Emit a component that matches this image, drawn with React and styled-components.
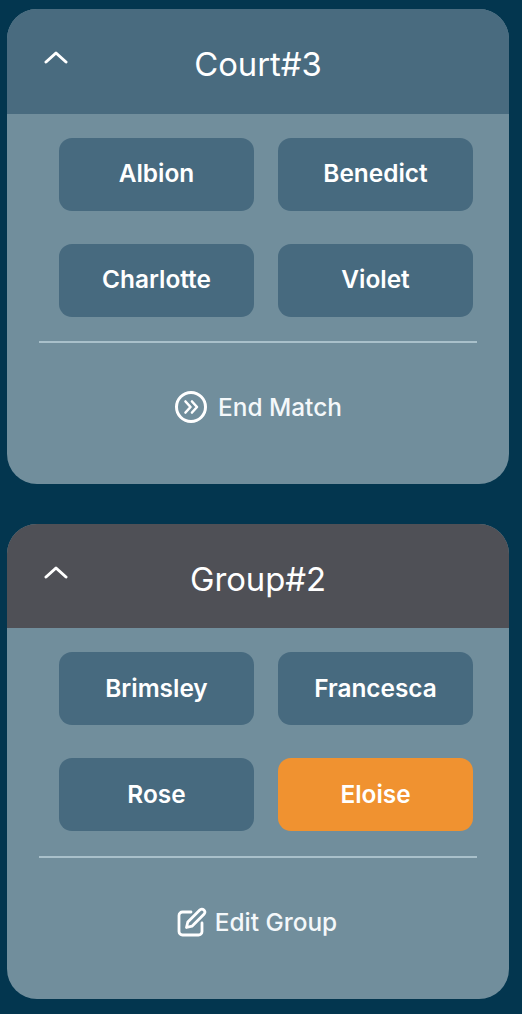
import React from 'react';
import styled, { createGlobalStyle } from 'styled-components';

const GlobalStyle = createGlobalStyle`
  html, body {
    margin: 0;
    padding: 0;
    background-color: #03364f;
    font-family: Inter, "Liberation Sans", sans-serif;
  }
`

const Page = styled.div`
  display: flex;
  flex-direction: column;
  gap: 40px;
  width: 522px;
  height: 1014px;
  box-sizing: border-box;
  padding: 9.2px 13px 0 7px;
  overflow: hidden;
`
const Card = styled.section`
  display: flex;
  flex-direction: column;
  height: 474.8px;
  border-radius: 30px;
  overflow: hidden;
  background-color: #718e9c;
`
const Header = styled.header`
  position: relative;
  display: flex;
  align-items: center;
  justify-content: center;
  flex: 0 0 104.4px;
  box-sizing: border-box;
  padding-top: 6px;
  background-color: ${props => props.$color};
`
const Title = styled.h2`
  margin: 0;
  color: #fff;
  font-size: 32.8px;
  font-weight: 400;
`
const Toggle = styled.svg`
  position: absolute;
  left: 37px;
  top: 41px;
  width: 24px;
  height: 16px;
`
const Players = styled.div`
  display: grid;
  grid-template-columns: 195px 195px;
  grid-auto-rows: 73px;
  gap: 33px 24px;
  padding: 24px 36px 24.4px 52px;
`
const Player = styled.button`
  border: 0;
  border-radius: 13px;
  padding: 0 0 2px;
  color: #fff;
  font-family: inherit;
  font-size: 24.4px;
  font-weight: 575;
  background-color: ${props => (props.$active ? '#f09230' : '#476a7f')};
`
const Divider = styled.hr`
  width: 438px;
  height: 2px;
  margin: 0 0 0 32px;
  border: 0;
  background-color: #a9c0ca;
`
const Action = styled.button`
  display: flex;
  align-items: center;
  justify-content: center;
  gap: ${props => props.$gap}px;
  height: 129px;
  border: 0;
  padding: 0 ${props => props.$shift}px 1px 0;
  color: #f4f8fa;
  background: none;
  font-family: inherit;
  font-size: 24.4px;
  font-weight: 500;
`

const Chevron = () => (
  <Toggle viewBox="0 0 24 16" fill="none" stroke="#fff" strokeWidth="3" strokeLinecap="round" strokeLinejoin="round">
    <path d="M2 12 L12 3 L22 12" />
  </Toggle>
)

const EndIcon = () => (
  <svg width="34" height="34" viewBox="0 0 34 34" fill="none" stroke="#fff" strokeLinecap="round" strokeLinejoin="round">
    <circle cx="17" cy="17" r="14.5" strokeWidth="3" />
    <path d="M11.5 11.5 L16.5 17 L11.5 22.5 M18 11.5 L23 17 L18 22.5" strokeWidth="2.6" />
  </svg>
)

const EditIcon = () => (
  <svg width="30" height="30" viewBox="0 0 30 30" fill="none" stroke="#fff" strokeWidth="2.8" strokeLinecap="round" strokeLinejoin="round">
    <path d="M14 5 H5.5 A3.5 3.5 0 0 0 2 8.5 V24.5 A3.5 3.5 0 0 0 5.5 28 H21.5 A3.5 3.5 0 0 0 25 24.5 V16" />
    <path d="M23 2.8 A3 3 0 0 1 27.2 7 L15 19.2 L9.5 20.5 L10.8 15 Z" />
  </svg>
)

const groups = [
  { title: 'Court#3', color: '#496b7f', players: ['Albion', 'Benedict', 'Charlotte', 'Violet'], action: 'End Match', icon: <EndIcon />, gap: 10, shift: 0 },
  { title: 'Group#2', color: '#4f5056', players: ['Brimsley', 'Francesca', 'Rose', 'Eloise'], active: 'Eloise', action: 'Edit Group', icon: <EditIcon />, gap: 8, shift: 2 },
]

const App = () => (
  <>
    <GlobalStyle />
    <Page>
      {groups.map(group => (
        <Card key={group.title}>
          <Header $color={group.color}>
            <Chevron />
            <Title>{group.title}</Title>
          </Header>
          <Players>
            {group.players.map(name => (
              <Player key={name} $active={name === group.active}>{name}</Player>
            ))}
          </Players>
          <Divider />
          <Action $gap={group.gap} $shift={group.shift}>{group.icon}{group.action}</Action>
        </Card>
      ))}
    </Page>
  </>
)
export default App;
